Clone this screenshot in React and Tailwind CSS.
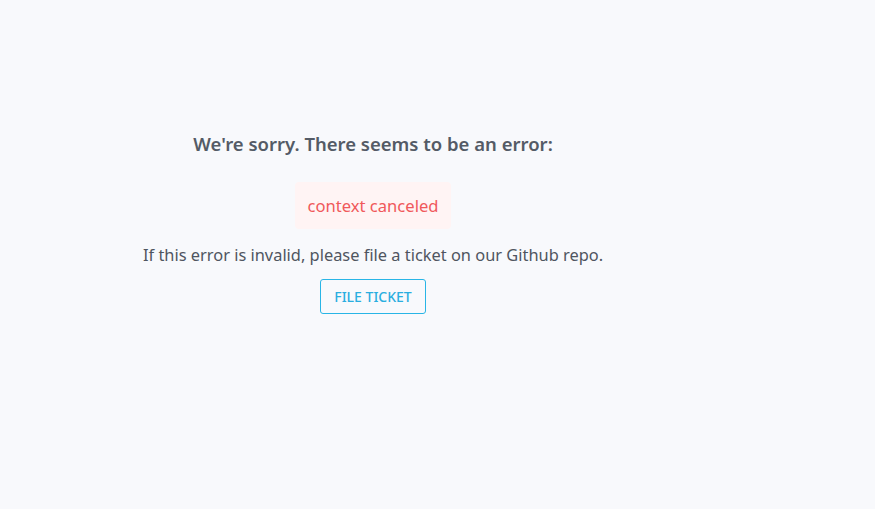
import React from "react";

const App = () => {
  return (
    <div
      className="min-h-screen w-full bg-[#f8f9fc] text-[#555b66]"
      style={{ fontFamily: "'Noto Sans', 'Open Sans', sans-serif" }}
    >
      <div className="w-[746px] pt-[131px] flex flex-col items-center">
        <h2 className="text-[18.5px] leading-[26px] font-semibold text-[#545b66]">
          We're sorry. There seems to be an error:
        </h2>

        <div className="mt-[25px] bg-[#fff4f4] rounded px-[12px] py-[12px] text-[16.6px] leading-[23px] text-[#f0595b]">
          context canceled
        </div>

        <p className="mt-[13px] text-[16.4px] leading-[26px] text-[#4f5560]">
          If this error is invalid, please file a ticket on our Github repo.
        </p>

        <button className="mt-[11px] h-[35px] px-[13px] rounded-[3px] border border-[#29b5e6] text-[#2aaee0] text-[14px] font-medium bg-transparent">
          FILE TICKET
        </button>
      </div>
    </div>
  );
};

export default App;
